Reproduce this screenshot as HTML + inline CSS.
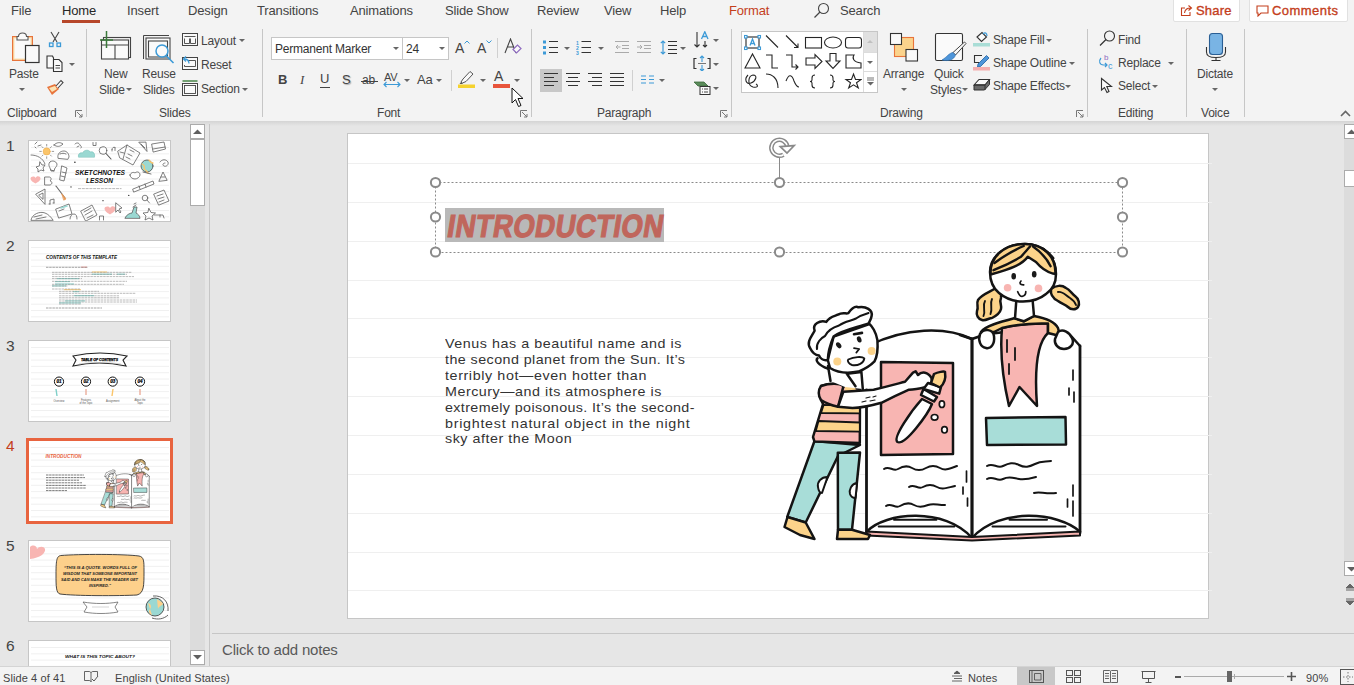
<!DOCTYPE html>
<html><head><meta charset="utf-8">
<style>
*{margin:0;padding:0;box-sizing:border-box}
html,body{width:1354px;height:685px;overflow:hidden;background:#e6e6e6;font-family:"Liberation Sans",sans-serif;color:#444}
.a{position:absolute}
.t{position:absolute;white-space:nowrap;font-size:12px;line-height:14px;color:#444;letter-spacing:-0.2px}
#tabs{left:0;top:0;width:1354px;height:25px;background:#f3f3f3}
#ribbon{left:0;top:25px;width:1354px;height:96px;background:#f3f3f3}
#shadow{left:0;top:121px;width:1354px;height:5px;background:linear-gradient(#d4d4d4,#e6e6e6)}
.tab{position:absolute;top:3px;font-size:13px;line-height:15px;color:#444;white-space:nowrap;letter-spacing:-0.15px}
.sep{position:absolute;width:1px;background:#c6c6c6}
.lbl{position:absolute;top:106px;font-size:12px;line-height:14px;color:#444;white-space:nowrap;letter-spacing:-0.2px}
.dd{position:absolute;width:0;height:0;border-left:3px solid transparent;border-right:3px solid transparent;border-top:3px solid #666}
#status{left:0;top:666px;width:1354px;height:19px;background:#f3f3f3;border-top:1px solid #d4d4d4}
#status .t{font-size:11px;letter-spacing:0.1px;top:4px !important}
.thumb{position:absolute;left:28px;width:143px;height:82px;background:#fff;border:1px solid #c6c6c6;overflow:hidden}
.num{position:absolute;left:6px;font-size:15.5px;line-height:16px;color:#444;margin-top:-1.5px}
</style></head><body>
<div id="tabs" class="a">
  <div class="tab" style="left:11px">File</div>
  <div class="tab" style="left:62px;color:#262626">Home</div>
  <div class="a" style="left:62px;top:20px;width:38px;height:3px;background:#b7472a"></div>
  <div class="tab" style="left:127px">Insert</div>
  <div class="tab" style="left:188px">Design</div>
  <div class="tab" style="left:257px">Transitions</div>
  <div class="tab" style="left:350px">Animations</div>
  <div class="tab" style="left:445px">Slide Show</div>
  <div class="tab" style="left:537px">Review</div>
  <div class="tab" style="left:604px">View</div>
  <div class="tab" style="left:660px">Help</div>
  <div class="tab" style="left:729px;color:#c43e1c">Format</div>
  <div class="tab" style="left:840px">Search</div>
</div>

<div id="ribbon" class="a">
</div>
<!-- ribbon contents (absolute page coords) -->
<div class="a" style="left:0;top:0;width:1354px;height:125px">
  <!-- separators -->
  <div class="sep" style="left:86px;top:29px;height:88px"></div>
  <div class="sep" style="left:262px;top:29px;height:88px"></div>
  <div class="sep" style="left:531px;top:29px;height:88px"></div>
  <div class="sep" style="left:731px;top:29px;height:88px"></div>
  <div class="sep" style="left:1087px;top:29px;height:88px"></div>
  <div class="sep" style="left:1186px;top:29px;height:88px"></div>
  <div class="sep" style="left:1244px;top:29px;height:88px"></div>
  <!-- group labels -->
  <div class="lbl" style="left:7px">Clipboard</div>
  <div class="lbl" style="left:159px">Slides</div>
  <div class="lbl" style="left:377px">Font</div>
  <div class="lbl" style="left:597px">Paragraph</div>
  <div class="lbl" style="left:880px">Drawing</div>
  <div class="lbl" style="left:1118px">Editing</div>
  <div class="lbl" style="left:1201px">Voice</div>
  <!-- launchers -->
  <svg class="a" style="left:75px;top:110px" width="8" height="8"><path d="M0.5 7V0.5H7" fill="none" stroke="#777"/><path d="M2 2L7 7M4 7H7V4" fill="none" stroke="#777"/></svg>
  <svg class="a" style="left:520px;top:110px" width="8" height="8"><path d="M0.5 7V0.5H7" fill="none" stroke="#777"/><path d="M2 2L7 7M4 7H7V4" fill="none" stroke="#777"/></svg>
  <svg class="a" style="left:720px;top:110px" width="8" height="8"><path d="M0.5 7V0.5H7" fill="none" stroke="#777"/><path d="M2 2L7 7M4 7H7V4" fill="none" stroke="#777"/></svg>
  <svg class="a" style="left:1076px;top:110px" width="8" height="8"><path d="M0.5 7V0.5H7" fill="none" stroke="#777"/><path d="M2 2L7 7M4 7H7V4" fill="none" stroke="#777"/></svg>
  <!-- collapse chevron -->
  <svg class="a" style="left:1340px;top:109px" width="11" height="8"><path d="M1 7L5.5 2.5L10 7" fill="none" stroke="#666" stroke-width="1.6"/></svg>

  <!-- CLIPBOARD -->
  <svg class="a" style="left:11px;top:31px" width="30" height="33">
    <rect x="1.6" y="5.6" width="19.8" height="23.8" fill="#fbe3b3" stroke="#e8743b" stroke-width="1.2"/>
    <rect x="3.5" y="7.5" width="16" height="20" fill="#fafafa"/>
    <path d="M7.5 5.5C7.5 3 9 2 11.5 2S15.5 3 15.5 5.5H17V9H6V5.5Z" fill="#fafafa" stroke="#555" stroke-width="1.1"/>
    <rect x="14.5" y="14.5" width="13.5" height="17" fill="#fafafa" stroke="#333" stroke-width="1.2"/>
  </svg>
  <div class="t" style="left:9px;top:67px">Paste</div>
  <div class="dd" style="left:19px;top:88px"></div>
  <svg class="a" style="left:48px;top:31px" width="14" height="18">
    <path d="M3 1L9 11M11 1L5 11" stroke="#444" stroke-width="1.1" fill="none"/>
    <rect x="1.5" y="12" width="3.5" height="3.5" fill="none" stroke="#3c9ad7" stroke-width="1.3"/>
    <rect x="9" y="12" width="3.5" height="3.5" fill="none" stroke="#3c9ad7" stroke-width="1.3"/>
  </svg>
  <svg class="a" style="left:46px;top:55px" width="18" height="18">
    <path d="M1 1H6.5L7.5 3V13H1Z" fill="#fafafa" stroke="#333" stroke-width="1.1"/>
    <path d="M7.5 4.5H13L16 7.5V16.5H7.5Z" fill="#fafafa" stroke="#333" stroke-width="1.1"/>
    <path d="M9.5 10.5H14M9.5 13H14" stroke="#333" stroke-width="0.9"/>
  </svg>
  <div class="dd" style="left:69px;top:63px"></div>
  <svg class="a" style="left:46px;top:79px" width="18" height="17">
    <path d="M1 8L9 5L13 10L6 16Z" fill="#e8743b"/>
    <path d="M3 9L9 7L11 10L6 13Z" fill="#fbe3b3"/>
    <path d="M10 7L15 1.5L17 3.5L12 9" fill="#fafafa" stroke="#444" stroke-width="1.1"/>
  </svg>


  <!-- FONT -->
  <div class="a" style="left:271px;top:37px;width:132px;height:23px;background:#fff;border:1px solid #c6c6c6"></div>
  <div class="a" style="left:402px;top:37px;width:47px;height:23px;background:#fff;border:1px solid #c6c6c6"></div>
  <div class="t" style="left:275px;top:42px;color:#333">Permanent Marker</div>
  <div class="t" style="left:406px;top:42px;color:#333">24</div>
  <div class="dd" style="left:393px;top:47px"></div>
  <div class="dd" style="left:439px;top:47px"></div>
  <div class="t" style="left:455px;top:41px;font-size:14px;color:#444">A</div>
  <svg class="a" style="left:464px;top:40px" width="6" height="4"><path d="M0.5 3.5L3 1L5.5 3.5" fill="none" stroke="#3c9ad7" stroke-width="1"/></svg>
  <div class="t" style="left:477px;top:41px;font-size:14px;color:#444">A</div>
  <svg class="a" style="left:486px;top:40px" width="6" height="4"><path d="M0.5 0.5L3 3L5.5 0.5" fill="none" stroke="#3c9ad7" stroke-width="1"/></svg>
  <div class="sep" style="left:497px;top:38px;height:20px;background:#d0d0d0"></div>
  <svg class="a" style="left:504px;top:38px" width="18" height="18">
    <path d="M1 15L6.5 1L12 15M3.5 9H9.5" fill="none" stroke="#444" stroke-width="1.1"/>
    <path d="M9 11.5L13.5 7L17 10.5L12.5 15Z" fill="#fafafa" stroke="#8e6bbf" stroke-width="1.2"/>
  </svg>
  <div class="t" style="left:278px;top:73px;font-size:13px;font-weight:bold;color:#444">B</div>
  <div class="t" style="left:300px;top:73px;font-size:13px;font-style:italic;color:#444;font-family:'Liberation Serif',serif">I</div>
  <div class="t" style="left:320px;top:72px;font-size:13px;color:#444">U</div>
  <div class="a" style="left:320px;top:87px;width:10px;height:1px;background:#444"></div>
  <div class="t" style="left:342px;top:73px;font-size:13px;color:#444;text-shadow:1px 1px 1px #aaa">S</div>
  <div class="t" style="left:362px;top:73px;font-size:12px;color:#444">ab</div>
  <div class="a" style="left:361px;top:81px;width:17px;height:1px;background:#444"></div>
  <div class="t" style="left:384px;top:70px;font-size:11px;color:#444">AV</div>
  <svg class="a" style="left:383px;top:81px" width="18" height="7"><path d="M1 3.5H17M3.5 1L1 3.5L3.5 6M14.5 1L17 3.5L14.5 6" fill="none" stroke="#3c9ad7" stroke-width="1.1"/></svg>
  <div class="dd" style="left:404px;top:79px"></div>
  <div class="t" style="left:417px;top:73px;font-size:13px;color:#444">Aa</div>
  <div class="dd" style="left:436px;top:79px"></div>
  <div class="sep" style="left:451px;top:70px;height:21px;background:#d0d0d0"></div>
  <svg class="a" style="left:458px;top:70px" width="18" height="18">
    <path d="M3 12L5 9L12 1.5L15 4L8 11.5L4.5 13Z" fill="#fafafa" stroke="#555" stroke-width="1"/>
    <path d="M3 12L1.5 14H5Z" fill="#555"/>
    <rect x="0" y="14.5" width="17" height="3.5" fill="#f5d22e"/>
  </svg>
  <div class="dd" style="left:480px;top:79px"></div>
  <div class="t" style="left:494px;top:69px;font-size:14px;color:#444">A</div>
  <div class="a" style="left:493px;top:84px;width:17px;height:4px;background:#e8543b"></div>
  <div class="dd" style="left:514px;top:79px"></div>
  <!-- cursor -->
  <svg class="a" style="left:511px;top:87px" width="14" height="21">
    <path d="M1 1V16L4.5 12.5L7.5 19.5L10 18.5L7 11.5H12Z" fill="#fff" stroke="#111" stroke-width="1"/>
  </svg>

  <!-- PARAGRAPH -->
  <svg class="a" style="left:543px;top:40px" width="16" height="15">
    <rect x="0" y="0.5" width="3" height="3" fill="#3c9ad7"/><rect x="0" y="6" width="3" height="3" fill="#3c9ad7"/><rect x="0" y="11.5" width="3" height="3" fill="#3c9ad7"/>
    <path d="M6 1.5H15M6 7.5H15M6 12.5H15" stroke="#333" stroke-width="1"/>
  </svg>
  <div class="dd" style="left:564px;top:47px"></div>
  <svg class="a" style="left:576px;top:40px" width="16" height="15">
    <text x="0" y="4.5" font-size="5" fill="#3c9ad7" font-family="Liberation Sans" font-weight="bold">1</text>
    <text x="0" y="10" font-size="5" fill="#3c9ad7" font-family="Liberation Sans" font-weight="bold">2</text>
    <text x="0" y="15" font-size="5" fill="#3c9ad7" font-family="Liberation Sans" font-weight="bold">3</text>
    <path d="M5.5 1.5H15M5.5 7.5H15M5.5 12.5H15" stroke="#333" stroke-width="1"/>
  </svg>
  <div class="dd" style="left:598px;top:47px"></div>
  <svg class="a" style="left:615px;top:40px" width="15" height="14">
    <path d="M0 1.5H14M7 5.5H14M7 8.5H14M0 12.5H14" stroke="#aaa" stroke-width="1"/>
    <path d="M5.5 7H1M3 5L1 7L3 9" fill="none" stroke="#aaa" stroke-width="1"/>
  </svg>
  <svg class="a" style="left:637px;top:40px" width="15" height="14">
    <path d="M0 1.5H14M7 5.5H14M7 8.5H14M0 12.5H14" stroke="#aaa" stroke-width="1"/>
    <path d="M0 7H5M3 5L5 7L3 9" fill="none" stroke="#aaa" stroke-width="1"/>
  </svg>
  <svg class="a" style="left:660px;top:40px" width="18" height="15">
    <path d="M3 1V14M0.8 3.2L3 1L5.2 3.2M0.8 11.8L3 14L5.2 11.8" fill="none" stroke="#3c9ad7" stroke-width="1.2"/>
    <path d="M8 1.5H17M8 5.5H17M8 9.5H17M8 13.5H17" stroke="#333" stroke-width="1"/>
  </svg>
  <div class="dd" style="left:680px;top:47px"></div>
  <svg class="a" style="left:694px;top:31px" width="17" height="18">
    <path d="M3 1V16M0.5 13.5L3 16L5.5 13.5" fill="none" stroke="#333" stroke-width="1.1"/>
    <path d="M11 10V16M9 14L11 16L13 14" fill="none" stroke="#333" stroke-width="1.1"/>
    <path d="M7.5 8L10.8 0.8L14 8M8.7 5.5H12.8" fill="none" stroke="#3c9ad7" stroke-width="1.3"/>
  </svg>
  <div class="dd" style="left:713px;top:39px"></div>
  <svg class="a" style="left:693px;top:55px" width="18" height="16">
    <path d="M3.5 3.5H1V13.5H3.5M14.5 3.5H17V13.5H14.5" fill="none" stroke="#333" stroke-width="1.2"/>
    <path d="M5 8.5H13" stroke="#777" stroke-width="1"/>
    <path d="M9 1V7M7 3L9 1L11 3M9 10V16M7 14L9 16L11 14" fill="none" stroke="#3c9ad7" stroke-width="1.1"/>
  </svg>
  <div class="dd" style="left:713px;top:63px"></div>
  <svg class="a" style="left:694px;top:81px" width="17" height="14">
    <path d="M0 1H10L14 5H4Z" fill="#5a8a5a" stroke="#3a6a3a" stroke-width="0.8"/>
    <rect x="6" y="5.5" width="10" height="8" fill="#fafafa" stroke="#333" stroke-width="1"/>
    <path d="M8 8H9M10 8H14M8 11H9M10 11H14" stroke="#333" stroke-width="0.9"/>
  </svg>
  <div class="dd" style="left:713px;top:87px"></div>
  <div class="a" style="left:540px;top:69px;width:22px;height:23px;background:#c8c8c8"></div>
  <svg class="a" style="left:543px;top:72px" width="84" height="15">
    <path d="M1 1.5H15M1 5.5H11M1 9.5H15M1 13.5H11" stroke="#333" stroke-width="1.1"/>
    <path d="M23 1.5H37M25 5.5H35M23 9.5H37M25 13.5H35" stroke="#333" stroke-width="1.1"/>
    <path d="M45 1.5H59M49 5.5H59M45 9.5H59M49 13.5H59" stroke="#333" stroke-width="1.1"/>
    <path d="M67 1.5H81M67 5.5H81M67 9.5H81M67 13.5H81" stroke="#333" stroke-width="1.1"/>
  </svg>
  <div class="sep" style="left:632px;top:70px;height:21px;background:#d0d0d0"></div>
  <svg class="a" style="left:641px;top:75px" width="14" height="10">
    <path d="M0 1H5M8 1H13M0 4.5H5M8 4.5H13M0 8H5M8 8H13" stroke="#3c9ad7" stroke-width="1.2"/>
  </svg>
  <div class="dd" style="left:659px;top:79px"></div>


  <!-- DRAWING -->
  <div class="a" style="left:741px;top:31px;width:137px;height:62px;background:#fff;border:1px solid #c6c6c6"></div>
  <div class="a" style="left:863px;top:32px;width:14px;height:60px;border-left:1px solid #dcdcdc"></div>
  <div class="a" style="left:864px;top:32px;width:13px;height:20px;background:#e0e0e0"></div>
  <div class="a" style="left:864px;top:52px;width:13px;height:1px;background:#dcdcdc"></div>
  <div class="a" style="left:864px;top:71px;width:13px;height:1px;background:#dcdcdc"></div>
  <svg class="a" style="left:866px;top:39px" width="8" height="5"><path d="M1 4L4 1L7 4Z" fill="#c0c0c0"/></svg>
  <div class="dd" style="left:867px;top:61px"></div>
  <svg class="a" style="left:866px;top:77px" width="9" height="9"><path d="M1 1H8M1 3H8" stroke="#666" stroke-width="0.9"/><path d="M1 5L4.5 8.5L8 5Z" fill="#666"/></svg>
  <svg class="a" style="left:744px;top:33px" width="118" height="58" fill="none" stroke="#262626" stroke-width="1.1">
    <!-- row1 -->
    <rect x="2" y="4" width="13" height="11"/>
    <rect x="0.5" y="2.5" width="2.5" height="2.5" fill="#fff" stroke="#3c9ad7"/><rect x="14" y="2.5" width="2.5" height="2.5" fill="#fff" stroke="#3c9ad7"/>
    <rect x="0.5" y="14" width="2.5" height="2.5" fill="#fff" stroke="#3c9ad7"/><rect x="14" y="14" width="2.5" height="2.5" fill="#fff" stroke="#3c9ad7"/>
    <path d="M6 12.5L8.5 6L11 12.5M7 10.5H10" stroke="#3c9ad7" stroke-width="1.3"/>
    <path d="M22 2.5L34 14.5"/>
    <path d="M42 2.5L54 14.5M50 14.5H54V10.5"/>
    <rect x="61.5" y="4.5" width="16" height="10.5"/>
    <ellipse cx="89" cy="9.5" rx="8.5" ry="5.5"/>
    <rect x="101.5" y="4.5" width="16" height="10.5" rx="2.5"/>
    <!-- row2 -->
    <path d="M1 35L8.5 21L16 35Z"/>
    <path d="M22 22H28V35H34"/>
    <path d="M42 22H48V34H54M51.5 31.5L54 34L51.5 36.5"/>
    <path d="M62 25H71V21.5L78 28.5L71 35.5V32H62Z"/>
    <path d="M86 20.5H92V28H96L89 35.5L82 28H86Z"/>
    <path d="M102 22H110C108 25 109 29 117 30V35H102Z"/>
    <!-- row3 -->
    <path d="M4 42C0 46 2 52 7 50C12 48 14 42 9 42C4 43 3 52 9 54C13 55 15 53 12 51"/>
    <path d="M22 41C28 41 34 45 34 55"/>
    <path d="M42 48C45 40 48 42 50 48C52 53 53 54 55 54"/>
    <path d="M71 42C69 42 68 43 68 45V47C68 48 67 48.5 66 48.5C67 48.5 68 49 68 50V52C68 54 69 55 71 55"/>
    <path d="M86 42C88 42 89 43 89 45V47C89 48 90 48.5 91 48.5C90 48.5 89 49 89 50V52C89 54 88 55 86 55"/>
    <path d="M109.5 41L111.5 46.5H117L112.5 49.8L114.3 55L109.5 51.8L104.7 55L106.5 49.8L102 46.5H107.5Z"/>
  </svg>
  <svg class="a" style="left:889px;top:32px" width="30" height="30">
    <rect x="5.5" y="5.5" width="19" height="19" fill="#fbd38c" stroke="#e8743b" stroke-width="1.1"/>
    <rect x="1.5" y="1.5" width="11" height="11" fill="#fafafa" stroke="#333" stroke-width="1.1"/>
    <rect x="17" y="17.5" width="11.5" height="11.5" fill="#fafafa" stroke="#333" stroke-width="1.1"/>
  </svg>
  <div class="t" style="left:883px;top:67px">Arrange</div>
  <div class="dd" style="left:901px;top:88px"></div>
  <svg class="a" style="left:934px;top:32px" width="33" height="30">
    <rect x="1.5" y="1.5" width="27" height="27" rx="1.5" fill="#fafafa" stroke="#333" stroke-width="1.1"/>
    <path d="M30.5 10L32 11.5L21.5 23L19 20.5Z" fill="#fafafa" stroke="#444" stroke-width="1"/>
    <path d="M19 20.5C15 21 13 25 8 28C14 29.5 20 28 21.5 23Z" fill="#4e95d9" stroke="#2a6aa8" stroke-width="0.6"/>
  </svg>
  <div class="t" style="left:934px;top:67px">Quick</div>
  <div class="t" style="left:930px;top:83px">Styles</div>
  <div class="dd" style="left:962px;top:88px"></div>
  <svg class="a" style="left:973px;top:31px" width="18" height="17">
    <path d="M4 6L9 1.5L13.5 6L8.5 10.5Z" fill="#fafafa" stroke="#333" stroke-width="1.1"/>
    <path d="M10 3C12 1 14 2 14 5" fill="none" stroke="#3c9ad7" stroke-width="1.2"/>
    <rect x="0" y="12" width="17" height="3.5" fill="#a9ddd6"/>
  </svg>
  <div class="t" style="left:993px;top:33px">Shape Fill</div>
  <div class="dd" style="left:1046px;top:39px"></div>
  <svg class="a" style="left:973px;top:53px" width="18" height="18">
    <path d="M6 9.5H1.5V2.5H9" fill="none" stroke="#333" stroke-width="1.1"/>
    <path d="M5 11L13.5 2.5L16 5L7.5 13.5L4.5 14Z" fill="#4e95d9" stroke="#2a6aa8" stroke-width="0.9"/>
    <rect x="0" y="14" width="17" height="3.5" fill="#f5aeae"/>
  </svg>
  <div class="t" style="left:993px;top:56px">Shape Outline</div>
  <div class="dd" style="left:1069px;top:62px"></div>
  <svg class="a" style="left:973px;top:78px" width="18" height="14">
    <path d="M1 7L6 1.5H16.5L12 7Z" fill="#fafafa" stroke="#333" stroke-width="1.1"/>
    <path d="M1 7V12H11.5L16.5 6.5V1.5L12 7Z" fill="#6a6a6a" stroke="#333" stroke-width="1"/>
    <path d="M1 7H12V12" fill="none" stroke="#333" stroke-width="1"/>
  </svg>
  <div class="t" style="left:993px;top:79px">Shape Effects</div>
  <div class="dd" style="left:1065px;top:85px"></div>

  <!-- EDITING -->
  <svg class="a" style="left:1099px;top:30px" width="17" height="17">
    <circle cx="10.5" cy="6" r="5" fill="none" stroke="#333" stroke-width="1.1"/>
    <path d="M7 9.5L1 15.5" stroke="#333" stroke-width="1.3"/>
  </svg>
  <div class="t" style="left:1118px;top:33px">Find</div>
  <svg class="a" style="left:1098px;top:53px" width="17" height="17">
    <path d="M3 5C0.5 8 1.5 12 5.5 12H9M7 10L9 12L7 14" fill="none" stroke="#3c9ad7" stroke-width="1.2"/>
    <text x="6" y="7" font-size="8" fill="#8e6bbf" font-family="Liberation Sans">b</text>
    <text x="10" y="16" font-size="9" fill="#3c9ad7" font-family="Liberation Sans">c</text>
  </svg>
  <div class="t" style="left:1118px;top:56px">Replace</div>
  <div class="dd" style="left:1168px;top:62px"></div>
  <svg class="a" style="left:1100px;top:77px" width="13" height="17">
    <path d="M1.5 1.5V13L4.5 10.5L7 15.5L9 14.5L6.8 9.5H11.5Z" fill="#fafafa" stroke="#333" stroke-width="1.1"/>
  </svg>
  <div class="t" style="left:1118px;top:79px">Select</div>
  <div class="dd" style="left:1152px;top:85px"></div>

  <!-- VOICE -->
  <svg class="a" style="left:1205px;top:32px" width="22" height="30">
    <rect x="4.5" y="1.5" width="13" height="21" rx="3" fill="#79b4e4" stroke="#2a5f95" stroke-width="1.1"/>
    <path d="M1.5 15V20C1.5 24 4 25.5 11 25.5C18 25.5 20.5 24 20.5 20V15M11 25.5V28.5M6.5 28.5H15.5" fill="none" stroke="#333" stroke-width="1.1"/>
  </svg>
  <div class="t" style="left:1197px;top:67px">Dictate</div>
  <div class="dd" style="left:1212px;top:88px"></div>

  <!-- Share / Comments -->
  <div class="a" style="left:1173px;top:-2px;width:67px;height:24px;background:#fff;border:1px solid #e1e1e1;border-radius:2px"></div>
  <svg class="a" style="left:1180px;top:4px" width="13" height="13">
    <path d="M5 4H1.5V11.5H10V8" fill="none" stroke="#c43e1c" stroke-width="1.1"/>
    <path d="M4.5 9C5 5.5 7 4 10.5 4M8.5 1.5L11.5 4L8.5 6.5" fill="none" stroke="#c43e1c" stroke-width="1.1"/>
  </svg>
  <div class="t" style="left:1196px;top:4px;font-size:13px;color:#c43e1c;letter-spacing:0.2px;-webkit-text-stroke:0.35px #c43e1c">Share</div>
  <div class="a" style="left:1249px;top:-2px;width:99px;height:24px;background:#fff;border:1px solid #e1e1e1;border-radius:2px"></div>
  <svg class="a" style="left:1256px;top:5px" width="13" height="12">
    <path d="M1 1H12V8H5L2 11V8H1Z" fill="none" stroke="#c43e1c" stroke-width="1.1"/>
  </svg>
  <div class="t" style="left:1272px;top:4px;font-size:13px;color:#c43e1c;letter-spacing:0.45px;-webkit-text-stroke:0.35px #c43e1c">Comments</div>
  <!-- search icon -->
  <svg class="a" style="left:813px;top:2px" width="17" height="17">
    <circle cx="10.5" cy="6.5" r="5" fill="none" stroke="#444" stroke-width="1.1"/>
    <path d="M7 10L1.5 15.5" stroke="#444" stroke-width="1.2"/>
  </svg>

  <!-- SLIDES -->
  <svg class="a" style="left:99px;top:30px" width="34" height="30">
    <rect x="4.5" y="7.5" width="27" height="20" fill="none" stroke="#444" stroke-width="1.1"/>
    <rect x="2.5" y="10" width="27" height="19" fill="#fafafa" stroke="#444" stroke-width="1.1"/>
    <path d="M3 15H29M16 15V29" stroke="#444" stroke-width="1.1"/>
    <path d="M1 10H14M7.5 1V18" stroke="#3a7a3a" stroke-width="1.5"/>
  </svg>
  <div class="t" style="left:104px;top:67px">New</div>
  <div class="t" style="left:99px;top:83px">Slide</div>
  <div class="dd" style="left:126px;top:88px"></div>
  <svg class="a" style="left:143px;top:35px" width="32" height="30">
    <path d="M0.5 0.5H26M0.5 0.5V24" fill="none" stroke="#444" stroke-width="1.1"/>
    <rect x="3" y="3" width="24" height="21" fill="#fafafa" stroke="#444" stroke-width="1.1"/>
    <rect x="5.5" y="6" width="19" height="16" fill="#fafafa" stroke="#444" stroke-width="1.1"/>
    <circle cx="19" cy="16" r="6" fill="#fafafa" stroke="#3c9ad7" stroke-width="1.5"/>
    <path d="M23 20.5L30.5 28" stroke="#3c9ad7" stroke-width="1.6"/>
  </svg>
  <div class="t" style="left:142px;top:67px">Reuse</div>
  <div class="t" style="left:143px;top:83px">Slides</div>
  <svg class="a" style="left:182px;top:33px" width="16" height="13">
    <rect x="0.5" y="0.5" width="15" height="12" fill="#fafafa" stroke="#444"/>
    <path d="M2.5 3.5H13.5M2.5 5.5V10.5H7.5V5.5M8.5 5.5V10.5H13.5V5.5" fill="none" stroke="#444" stroke-width="0.9"/>
  </svg>
  <div class="t" style="left:201px;top:34px">Layout</div>
  <div class="dd" style="left:239px;top:39px"></div>
  <svg class="a" style="left:182px;top:56px" width="16" height="14">
    <rect x="0.5" y="1.5" width="15" height="12" fill="#fafafa" stroke="#444"/>
    <path d="M6 4.5H13.5V10.5H2.5V9" fill="none" stroke="#444" stroke-width="0.9"/>
    <path d="M7 7.5C7 4 5 3 2 3M4 0.5L1.5 3L4 5.5" fill="none" stroke="#3c9ad7" stroke-width="1.3"/>
  </svg>
  <div class="t" style="left:201px;top:58px">Reset</div>
  <svg class="a" style="left:182px;top:80px" width="16" height="16">
    <path d="M0.5 1H15.5" stroke="#3a7a3a" stroke-width="1.4"/>
    <rect x="0.5" y="3.5" width="15" height="12" fill="#fafafa" stroke="#444"/>
    <rect x="2.5" y="5.5" width="11" height="8" fill="none" stroke="#444" stroke-width="0.9"/>
  </svg>
  <div class="t" style="left:201px;top:82px">Section</div>
  <div class="dd" style="left:242px;top:88px"></div>
</div>

<div id="shadow" class="a"></div>


<!-- THUMBNAIL PANE -->
<div class="a" style="left:190px;top:124px;width:15px;height:542px;background:#dcdcdc"></div>
<div class="a" style="left:190px;top:124px;width:15px;height:15px;background:#fff;border:1px solid #ababab"></div>
<svg class="a" style="left:193px;top:129px" width="9" height="5"><path d="M0 5L4.5 0.5L9 5Z" fill="#606060"/></svg>
<div class="a" style="left:190px;top:139px;width:15px;height:67px;background:#fff;border:1px solid #ababab"></div>
<div class="a" style="left:190px;top:650px;width:15px;height:15px;background:#fff;border:1px solid #ababab"></div>
<svg class="a" style="left:193px;top:655px" width="9" height="5"><path d="M0 0L4.5 4.5L9 0Z" fill="#606060"/></svg>
<div class="a" style="left:209px;top:124px;width:1px;height:542px;background:#c6c6c6"></div>

<div class="num" style="top:139px">1</div>
<div class="thumb" style="top:140px" id="th1"><svg width="141" height="80" viewBox="0 0 141 80"><g stroke="#ececec" stroke-width="0.8"><path d="M2 6.5H140" /><path d="M2 12.8H140" /><path d="M2 19.1H140" /><path d="M2 25.4H140" /><path d="M2 31.7H140" /><path d="M2 38.0H140" /><path d="M2 44.3H140" /><path d="M2 50.6H140" /><path d="M2 56.9H140" /><path d="M2 63.2H140" /><path d="M2 69.5H140" /><path d="M2 75.8H140" /></g>
<g fill="none" stroke="#555" stroke-width="0.75" stroke-linejoin="round" stroke-linecap="round">
<path d="M6 3l2-2M9 5l3-1M6 6l1 1"/>
<path d="M25 4c3-3 6-3 9-1c-3 3-6 3-9 1z"/>
<path d="M46 3c2-2 4-1 5 1c1 1 2 2 1 3M48 6l2-1"/>
<path d="M64 1.5v3h3v-3"/>
<circle cx="17.7" cy="10.4" r="3.6" fill="#fbc56a" stroke="#e9a94a" stroke-width="0.5"/>
<path d="M12.3 10.4h-1.6M23.1 10.4h1.6M17.7 5v-1.6M17.7 15.8v1.6M14 6.7l-1-1M21.4 14.1l1 1M21.4 6.7l1-1M14 14.1l-1 1" stroke-width="0.6"/>
<path d="M29 17c-1-4 2-7 6-7c3 0 5 3 5 6l-1 2z M31 13c2-1 4-1 6 0"/>
<path d="M49.5 16c-1-3 2-5 4-4c1-3 6-4 8-1c2-1 5 1 4 5z" fill="#9ad8d2" stroke="#6bb8b0" stroke-width="0.5"/>
<circle cx="74" cy="9.5" r="3.8"/><path d="M77 12.5l5 5.5" stroke-width="1.1"/>
<path d="M83 8.5c0-2 2-3 3-2M86 6.5v3M83 8.5v1.5"/>
<path d="M89 10l9-6l13 8l-7 12l-13-7z M98 4l-4 14M91 11l4 1M101 9l4 2M99 13l4 2M97 16l4 2" />
<path d="M110 1.5l8 9l-1-9z M112 3l4 4"/>
<path d="M123 3l12-2l1.5 7l-12 3z M124 8l12-2"/>
<path d="M2 14c6 0 12 3 14 9"/><path d="M11 21l2 3l3 0l-2 3l1 3l-3-1l-3 2l0-3l-2-2l3-1z"/>
<path d="M21 21c2-2 6-1 7 2c0 2-1 3-2 4l-1 3h-3l-1-3c-1-2-2-4 0-6z M22 29l3 1"/>
<path d="M33 25l5 2l-3 13l-4-1z M33 31l4 1M32 35l4 1"/>
<circle cx="118" cy="25" r="6" fill="#9ad8d2" stroke="#444"/><path d="M113 23c2 1 3 3 2 5c2 1 3 2 4 4M120 19c1 2 3 3 4 3" stroke="#fbc56a" stroke-width="1.3"/><path d="M114 31l8 2" stroke="#444"/>
<path d="M131 21c2-3 6-3 8 0c1 3-2 5-4 4c-2-1-1-3 1-3"/>
<path d="M1.5 37.5c0-2 4-3 5-0.5c1-2.5 5-2 5 0.5c0 2-3 4-5 5c-2-1-5-3-5-5z" fill="#f8b5b2" stroke="none"/>
<path d="M16 36h4c2 0 3 2 1 4c2 0 3 3 0 4h-5z"/>
<path d="M101 34c1-3 4-3 5-2c2-2 5-1 5 2c0 2-3 4-5 4c-3 0-5-2-5-4z"/>
<path d="M130 40l4-9l4 8z M132 36h4"/>
<path d="M27 45l9 12" stroke="#666" stroke-width="1.1"/><path d="M33 53l4 5l-2 1z" fill="#e99a55" stroke="#e99a55"/>
<path d="M104 48l20-8l1 3l-20 8z M110 45l1 3M116 43l1 3"/>
<path d="M7 53l9-5l0 15z M10 54l4-2v6z"/>
<path d="M21 63v-4l4-1v4M21 63l-1 0M25 62l-1 0"/>
<path d="M125 53l10-4l5 11l-10 4z M128 55l6-2M129 58l6-2M130 61l5-2"/>
<circle cx="116" cy="57" r="2.8"/><path d="M118 59l2.5 3"/>
<path d="M2 79c1-6 9-9 14-7c3 1 6 4 8 7z M5 76l8-2M7 78l10-2"/>
<path d="M27 68l13-5l3 10l-13 4z M30 70l5-2" /><path d="M32 67l6-2" stroke="#9ad8d2" stroke-width="1.6"/>
<path d="M41 78c0-3 2-5 4-5c2 0 3 2 3 5"/>
<path d="M52 70l11-6l5 10l-11 6z M55 71l7-4M56 74l7-4M58 77l6-3"/>
<path d="M70.5 79v-4h4v4"/>
<path d="M75.5 67.5c0-2 4-3 5.5-0.5c1.5-2.5 5.5-2 5.5 0.5c0 3-4 5-5.5 6c-1.5-1-5.5-3-5.5-6z" fill="#f8b5b2" stroke="none"/>
<path d="M87 62l6 5l-3 1l2 3l-1 1l-2-3l-2 2z"/>
<path d="M96 77c1-3 5-5 7-5l2-6h3l-1 6c2 1 4 3 4 5z" fill="#9ad8d2" stroke="#555"/><path d="M104 66l3-2M105 63l2-1"/>
<path d="M120 67.5l2 4l4.5 0.5l-3.5 3l1 4l-4-2l-4 2l1-4l-3-3l4.5-0.5z"/>
<path d="M125 74h9l1 3M131 74v2"/>
</g>
<g fill="#111"><circle cx="45.9" cy="21.3" r="0.7"/><circle cx="99.8" cy="54.4" r="0.6"/><circle cx="74" cy="59.7" r="0.6"/><circle cx="42" cy="45.9" r="0.6"/></g>
<g fill="#111" font-family="Liberation Sans" font-weight="bold" font-style="italic" text-anchor="middle">
<text x="71" y="34.2" font-size="6.8" textLength="50" lengthAdjust="spacingAndGlyphs">SKETCHNOTES</text>
<text x="70.5" y="42" font-size="6.8" textLength="27" lengthAdjust="spacingAndGlyphs">LESSON</text>
</g>
<path d="M49 47.6H92.5" stroke="#888" stroke-width="0.6" stroke-dasharray="3 0.8"/>
</svg></div>
<div class="num" style="top:239px">2</div>
<div class="thumb" style="top:240px" id="th2"><svg width="141" height="80" viewBox="0 0 141 80"><g stroke="#ececec" stroke-width="0.8"><path d="M2 6.5H140" /><path d="M2 12.8H140" /><path d="M2 19.1H140" /><path d="M2 25.4H140" /><path d="M2 31.7H140" /><path d="M2 38.0H140" /><path d="M2 44.3H140" /><path d="M2 50.6H140" /><path d="M2 56.9H140" /><path d="M2 63.2H140" /><path d="M2 69.5H140" /><path d="M2 75.8H140" /></g><rect x="52" y="25.5" width="6" height="1.2" fill="#f8b5b2"/><rect x="63" y="30.4" width="15" height="1.2" fill="#fbd38a"/><rect x="63" y="32.6" width="20" height="1.2" fill="#9ad8d2"/><rect x="88" y="32.6" width="8" height="1.2" fill="#9ad8d2"/><rect x="28" y="37" width="22" height="1.2" fill="#9ad8d2"/><rect x="26" y="40" width="15" height="1.2" fill="#9ad8d2"/><rect x="26" y="42.4" width="19" height="1.2" fill="#9ad8d2"/><rect x="23" y="44.3" width="14" height="1.2" fill="#9ad8d2"/><rect x="35" y="48" width="17" height="1.2" fill="#fbd38a"/><rect x="44" y="50" width="6" height="1.2" fill="#9ad8d2"/><rect x="45" y="54" width="20" height="1.2" fill="#9ad8d2"/><rect x="36" y="59.3" width="20" height="1.2" fill="#9ad8d2"/><rect x="30" y="61.3" width="22" height="1.2" fill="#9ad8d2"/><path d="M17 26.3h42" stroke="#666" stroke-width="0.6" stroke-dasharray="2.5 0.7"/><path d="M23 31.3h80" stroke="#808080" stroke-width="0.55" stroke-dasharray="2.5 0.7"/><path d="M23 33.3h75" stroke="#808080" stroke-width="0.55" stroke-dasharray="2.5 0.7"/><path d="M23 35.6h82" stroke="#808080" stroke-width="0.55" stroke-dasharray="2.5 0.7"/><path d="M23 37.6h30" stroke="#808080" stroke-width="0.55" stroke-dasharray="2.5 0.7"/><path d="M23 40.3h75" stroke="#808080" stroke-width="0.55" stroke-dasharray="2.5 0.7"/><path d="M23 43.3h72" stroke="#808080" stroke-width="0.55" stroke-dasharray="2.5 0.7"/><path d="M23 45h16" stroke="#808080" stroke-width="0.55" stroke-dasharray="2.5 0.7"/><path d="M23 48h28" stroke="#808080" stroke-width="0.55" stroke-dasharray="2.5 0.7"/><path d="M30 50.3h40" stroke="#808080" stroke-width="0.55" stroke-dasharray="2.5 0.7"/><path d="M30 52.3h77" stroke="#808080" stroke-width="0.55" stroke-dasharray="2.5 0.7"/><path d="M30 54.8h60" stroke="#808080" stroke-width="0.55" stroke-dasharray="2.5 0.7"/><path d="M30 56.8h60" stroke="#808080" stroke-width="0.55" stroke-dasharray="2.5 0.7"/><path d="M30 59h78" stroke="#808080" stroke-width="0.55" stroke-dasharray="2.5 0.7"/><path d="M30 61h78" stroke="#808080" stroke-width="0.55" stroke-dasharray="2.5 0.7"/><path d="M30 63h22" stroke="#808080" stroke-width="0.55" stroke-dasharray="2.5 0.7"/><path d="M17 67h56" stroke="#666" stroke-width="0.6" stroke-dasharray="2.5 0.7"/>
<text x="17" y="17.5" font-size="4.8" font-family="Liberation Sans" font-weight="bold" font-style="italic" fill="#111" textLength="71" lengthAdjust="spacingAndGlyphs">CONTENTS OF THIS TEMPLATE</text>
</svg></div>
<div class="num" style="top:339px">3</div>
<div class="thumb" style="top:340px" id="th3"><svg width="141" height="80" viewBox="0 0 141 80"><g stroke="#ececec" stroke-width="0.8"><path d="M2 6.5H140" /><path d="M2 12.8H140" /><path d="M2 19.1H140" /><path d="M2 25.4H140" /><path d="M2 31.7H140" /><path d="M2 38.0H140" /><path d="M2 44.3H140" /><path d="M2 50.6H140" /><path d="M2 56.9H140" /><path d="M2 63.2H140" /><path d="M2 69.5H140" /><path d="M2 75.8H140" /></g>
<path d="M44 15c18-4 36-4 54 0l-4 4l3 6c-18-4-36-4-53 0l3-6z" fill="#fff" stroke="#222" stroke-width="1.1"/><path d="M50 23c14-2 28-2 42 0" stroke="#bbb" stroke-width="0.6" fill="none"/>
<text x="70.5" y="20.4" font-size="3.8" font-family="Liberation Sans" font-weight="bold" font-style="italic" fill="#000" text-anchor="middle" textLength="37" lengthAdjust="spacingAndGlyphs" stroke="#000" stroke-width="0.25">TABLE OF CONTENTS</text>
<g fill="#fff" stroke="#111" stroke-width="1"><circle cx="30" cy="40.6" r="4.6"/><circle cx="57" cy="40.6" r="4.6"/><circle cx="83.7" cy="40.6" r="4.6"/><circle cx="111" cy="40.6" r="4.6"/></g>
<g font-size="4.6" font-family="Liberation Sans" font-weight="bold" font-style="italic" fill="#000" stroke="#000" stroke-width="0.2" text-anchor="middle"><text x="30" y="42.3">01</text><text x="57" y="42.2">02</text><text x="83.7" y="42.2">03</text><text x="111" y="42.2">04</text></g>
<path d="M27 48l1 7" stroke="#7fcfc8" stroke-width="1.4"/><path d="M57 48v6" stroke="#e8a08a" stroke-width="1.2"/><path d="M84 48l-1 7" stroke="#fbc56a" stroke-width="1.4"/><path d="M111 48v6" stroke="#e8a08a" stroke-width="1.2"/>
<g font-size="2.6" font-family="Liberation Sans" fill="#555" text-anchor="middle"><text x="30" y="61.3">Overview</text><text x="57" y="60.3">Features</text><text x="57" y="62.8">of the Topic</text><text x="83.7" y="61.3">Assignment</text><text x="111" y="60">About the</text><text x="111" y="62.5">Topic</text></g>
</svg></div>
<div class="num" style="top:439px;color:#c43e1c">4</div>
<div class="a" style="left:26px;top:438px;width:147px;height:86px;border:3px solid #e8643f;background:#fff;overflow:hidden" id="th4"><svg width="141" height="80" viewBox="0 0 141 80"><g stroke="#ececec" stroke-width="0.8"><path d="M2 6.5H140" /><path d="M2 12.8H140" /><path d="M2 19.1H140" /><path d="M2 25.4H140" /><path d="M2 31.7H140" /><path d="M2 38.0H140" /><path d="M2 44.3H140" /><path d="M2 50.6H140" /><path d="M2 56.9H140" /><path d="M2 63.2H140" /><path d="M2 69.5H140" /><path d="M2 75.8H140" /></g>
<text x="16.5" y="17" font-size="4.6" font-family="Liberation Sans" font-weight="bold" font-style="italic" fill="#e8643f" textLength="36" lengthAdjust="spacingAndGlyphs">INTRODUCTION</text>
<g stroke="#444" stroke-width="0.7" stroke-dasharray="2.5 0.6"><path d="M17 34h38M17 36.6h39M17 39.2h33M17 41.8h36M17 44.4h40M17 47h40M17 49.6h21"/></g>
<g transform="translate(0.5 0.6) scale(0.1636) translate(-348 -134)"><use href="#ill"/></g>
</svg></div>
<div class="num" style="top:539px">5</div>
<div class="thumb" style="top:540px" id="th5"><svg width="141" height="80" viewBox="0 0 141 80"><g stroke="#ececec" stroke-width="0.8"><path d="M2 6.5H140" /><path d="M2 12.8H140" /><path d="M2 19.1H140" /><path d="M2 25.4H140" /><path d="M2 31.7H140" /><path d="M2 38.0H140" /><path d="M2 44.3H140" /><path d="M2 50.6H140" /><path d="M2 56.9H140" /><path d="M2 63.2H140" /><path d="M2 69.5H140" /><path d="M2 75.8H140" /></g>
<path d="M1 6c3-3 7-1 7 2c2-3 7-3 8 0c1 4-5 9-15 10z" fill="#f8b5b2"/>
<path d="M32 14.5C50 13 95 13 110 15C115 16 115 20 115 30C115 45 115 52 108 54C90 55 45 55 31 53C27 52 27 45 27 33C27 18 28 15 32 14.5Z" fill="#fdd08b" stroke="#333" stroke-width="0.9"/>
<g fill="#222" font-family="Liberation Sans" font-weight="bold" font-style="italic" font-size="4">
<text x="35" y="28" textLength="73" lengthAdjust="spacingAndGlyphs">“THIS IS A QUOTE. WORDS FULL OF</text>
<text x="34" y="33.8" textLength="74" lengthAdjust="spacingAndGlyphs">WISDOM THAT SOMEONE IMPORTANT</text>
<text x="32" y="40" textLength="77" lengthAdjust="spacingAndGlyphs">SAID AND CAN MAKE THE READER GET</text>
<text x="60" y="45.5" textLength="22" lengthAdjust="spacingAndGlyphs">INSPIRED.”</text></g>
<path d="M54 61c12 2 24 2 35 0l-3 5l3 5c-11 2-23 2-34 0l3-5z" fill="#fff" stroke="#555" stroke-width="0.7"/>
<path d="M63 66h17" stroke="#aaa" stroke-width="0.5"/>
<circle cx="126" cy="66" r="9" fill="#9ad8d2" stroke="#333" stroke-width="0.8"/>
<path d="M119 62c3 1 4 4 2 6c-2 2-1 5 2 6M128 58c2 2 5 2 6 5c-2 2-4 2-5 5" fill="#fdd08b" stroke="none"/>
<path d="M124 55c10-1 16 6 15 15M123 77c6 2 12 1 16-3" fill="none" stroke="#555" stroke-width="0.9"/>
</svg></div>
<div class="num" style="top:639px">6</div>
<div class="thumb" style="top:640px;height:30px" id="th6"><svg width="141" height="30" viewBox="0 0 141 30"><g stroke="#ececec" stroke-width="0.8"><path d="M2 6.5H140" /><path d="M2 12.8H140" /><path d="M2 19.1H140" /><path d="M2 25.4H140" /><path d="M2 31.7H140" /><path d="M2 38.0H140" /><path d="M2 44.3H140" /><path d="M2 50.6H140" /><path d="M2 56.9H140" /><path d="M2 63.2H140" /><path d="M2 69.5H140" /><path d="M2 75.8H140" /></g>
<text x="36" y="17" font-size="4.4" font-family="Liberation Sans" font-weight="bold" font-style="italic" fill="#111" textLength="70" lengthAdjust="spacingAndGlyphs">WHAT IS THIS TOPIC ABOUT?</text>
</svg></div>


<!-- SLIDE -->
<div class="a" id="slide" style="left:347px;top:133px;width:862px;height:486px;background:#fff;border:1px solid #c6c6c6"></div>
<div class="a" style="left:348px;top:163px;width:864px;height:1px;background:#efefef"></div>
<div class="a" style="left:348px;top:202px;width:864px;height:1px;background:#efefef"></div>
<div class="a" style="left:348px;top:241px;width:864px;height:1px;background:#efefef"></div>
<div class="a" style="left:348px;top:280px;width:864px;height:1px;background:#efefef"></div>
<div class="a" style="left:348px;top:318px;width:864px;height:1px;background:#efefef"></div>
<div class="a" style="left:348px;top:357px;width:864px;height:1px;background:#efefef"></div>
<div class="a" style="left:348px;top:396px;width:864px;height:1px;background:#efefef"></div>
<div class="a" style="left:348px;top:435px;width:864px;height:1px;background:#efefef"></div>
<div class="a" style="left:348px;top:474px;width:864px;height:1px;background:#efefef"></div>
<div class="a" style="left:348px;top:513px;width:864px;height:1px;background:#efefef"></div>
<div class="a" style="left:348px;top:552px;width:864px;height:1px;background:#efefef"></div>
<div class="a" style="left:348px;top:590px;width:864px;height:1px;background:#efefef"></div>

<!-- title placeholder -->
<svg class="a" style="left:434px;top:181px" width="690" height="73"><rect x="1.5" y="1.5" width="687" height="70" fill="none" stroke="#8a8a8a" stroke-width="1" stroke-dasharray="2 2"/></svg>
<div class="a" style="left:779px;top:157px;width:1px;height:25px;background:#8a8a8a"></div>
<svg class="a" style="left:766px;top:135px" width="32" height="26">
  <path d="M17.4 19.7A8 8 0 1 1 21.3 11.4" fill="none" stroke="#8a8a8a" stroke-width="4.6"/>
  <path d="M17.4 19.7A8 8 0 1 1 21.3 11.4" fill="none" stroke="#fff" stroke-width="1.6"/>
  <path d="M14.3 11.6L28.2 10.6L21 18Z" fill="#fff" stroke="#8a8a8a" stroke-width="1.7" stroke-linejoin="miter"/>
</svg>
<svg class="a" style="left:425px;top:172px" width="710" height="92">
  <g fill="#fff" stroke="#8a8a8a" stroke-width="2">
    <circle cx="10.5" cy="10.5" r="4.6"/><circle cx="354.5" cy="10.5" r="4.6"/><circle cx="697.5" cy="10.5" r="4.6"/>
    <circle cx="10.5" cy="45" r="4.6"/><circle cx="697.5" cy="45" r="4.6"/>
    <circle cx="10.5" cy="80" r="4.6"/><circle cx="354.5" cy="80" r="4.6"/><circle cx="697.5" cy="80" r="4.6"/>
  </g>
</svg>
<div class="a" style="left:445px;top:208px;width:219px;height:34px;background:#b9b9b9"></div>
<div class="a" id="title" style="left:445px;top:208px;font-size:32px;line-height:36px;font-weight:bold;color:#c0665c;white-space:nowrap;transform-origin:0 100%;transform:skewX(-9deg) scaleX(0.86);-webkit-text-stroke:1.2px #c0665c;letter-spacing:0.5px">INTRODUCTION</div>


<!-- illustration -->
<svg class="a" style="left:770px;top:230px" width="330" height="320" viewBox="770 230 330 320">
<g id="ill" stroke="#141414" stroke-width="2.5" stroke-linejoin="round" stroke-linecap="round">
  <!-- book pages -->
  <path d="M866.5 532V390L870 345C905 328 945 326 972 339C1000 328 1045 330 1072 337L1080 346V532L972 537Z" fill="#fff" stroke="none"/>
  <path d="M866.5 532V390" fill="none" stroke-width="2.8"/>
  <path d="M870 345C905 328 945 326 972 339C1000 328 1045 330 1072 337L1080 346" fill="none"/>
  <path d="M1080 346V533" fill="none" stroke-width="2.8"/>
  <path d="M972 339V539" fill="none" stroke-width="3.2"/>
  <!-- page stack bottom -->
  <path d="M866.8 531.6C885 512 945 507 972 538" fill="none"/>
  <path d="M972 538C1000 507 1058 512 1080 531.6" fill="none"/>
  <path d="M894 519.7H936.4M878.7 526.5H954.3M1009.5 519.7H1047M992.5 526.5H1065.5" fill="none" stroke-width="2"/>
  <path d="M866.5 531.5L972 537L1080 531.5L1080 535.5L972 540.5L866.5 535.5Z" fill="#f7b3b0" stroke-width="2"/>
  <!-- pink picture rect -->
  <path d="M881 362L953 363L953 454L881 455Z" fill="#f8b5b2"/>
  <!-- teal rect -->
  <path d="M986 418L1065.5 417L1066 444.5L987 445Z" fill="#a8ddd8"/>
  <!-- wavy text lines -->
  <g fill="none" stroke-width="2">
    <path d="M884 469c5-4 9 3 14 0s9-4 14-1 9 3 14 0 9-3 14 0 9 1 17-2"/>
    <path d="M909 487c5-4 9 3 14 0s9-3 14 0 9 1 18-1"/>
    <path d="M886 506c5-4 9 3 14 0s9-4 14-1 9 2 14 0 9 0 17 0"/>
    <path d="M987 466c6-4 10 3 16 0s10-4 16-1 10 2 16-1 10-2 16-3"/>
    <path d="M987 479c6-4 10 3 16 0s10-1 16 0 10 0 17-2"/>
    <path d="M1034 493c5-2 10 1 22 0"/>
  </g>
  <g fill="none" stroke-width="1.7">
    <path d="M966.5 471V482M963 487V494M967.5 498V506M1073 485V496M1067.5 499V507M1073 501V516M1073 370V380M1069 388V395M1074 392V402"/>
  </g>
  <!-- bookmark -->
  <path d="M1002 328C1015 325 1035 323 1048 323.5L1048 333C1038 342 1034 365 1037 406L1019.5 387L1009 406C1003 380 1000 350 1002 328Z" fill="#f8b5b2"/>
  <path d="M1007 340V352M1015 348V360M1009 364V374" fill="none" stroke-width="1.8"/>
  <!-- girl shoulders -->
  <path d="M981 332C985 326 1000 322 1015 318L1023.7 321.3L1034 316C1045 318 1055 322 1058 328L1060 336L1048 333L1048 323.5C1035 323 1015 325 1002 328L994 332Z" fill="#fcd38a"/>
  <!-- girl hands -->
  <path d="M980 334C984 328 993 329 994 336C995 344 991 349 986 348C980 347 978 340 980 334Z" fill="#fff"/>
  <path d="M1058 332C1063 328 1070 333 1072 338C1075 344 1070 349 1064 349C1058 349 1054 344 1055 339Z" fill="#fff"/>
  <path d="M972 339L960 335" fill="none"/>
  <!-- pigtails -->
  <path d="M996 288C990 292 982 294 978 300C976 304 979 307 977 311C976 315 978 319 982 320C986 321 989 318 992 318C996 316 1000 313 1001 309C1002 305 999 302 1001 298C1002 294 999 290 996 288Z" fill="#fcd38a"/>
  <path d="M985 301C982 306 986 310 983.5 316M992 299C989.5 304 993 308 990.5 314" fill="none" stroke-width="1.9"/>
  <path d="M1051 289C1056 285 1062 285 1066 288C1070 290 1072 294 1075 296C1079 299 1080 304 1078 307C1076 310 1071 310 1068 307C1065 304 1062 304 1058 301C1054 299 1050 296 1051 289Z" fill="#fcd38a"/>
  <path d="M1058 292C1063 291 1066 296 1070 298C1073 300 1075 302 1076 305" fill="none" stroke-width="1.9"/>
  <!-- girl neck -->
  <path d="M1016.4 299L1015 318.5L1023.7 321.3L1034 316L1032.5 299Z" fill="#fff"/>
  <!-- girl head -->
  <path d="M1025 244C1043 244 1056 256 1056 274C1056 284 1052 290 1046 294C1040 299 1034 301.5 1023 301.5C1012 301.5 1005 298 999 293C993 288 990 282 990 272C990 256 1006 244 1025 244Z" fill="#fff"/>
  <path d="M990.5 274C990 256 1005 244 1025 244C1043 244 1056 256 1055.5 274L1053 273.6C1047 272 1041 268 1036 262L1027.8 256.8C1022 265 1010 269 991.5 274.3Z" fill="#fcd38a"/>
  <path d="M994.5 263C1004 256 1014 250 1023.7 246M993.5 270.2C1004 266 1014 261 1021 256.8C1025 252 1028 249 1030 246.5M1033 246.5C1041 252 1047 259 1050.6 266.2M1042.5 248.7C1048 252 1051 255 1053.3 258.2" fill="none" stroke-width="2.4"/>
  <ellipse cx="1013.7" cy="276.3" rx="2.3" ry="3.2" fill="#1a1a1a" stroke="none"/>
  <ellipse cx="1034.2" cy="274.3" rx="2.3" ry="3.2" fill="#1a1a1a" stroke="none"/>
  <circle cx="1007.6" cy="287.7" r="3.8" fill="#f8b5b2" stroke="none"/>
  <circle cx="1038.5" cy="288.4" r="3.8" fill="#f8b5b2" stroke="none"/>
  <path d="M1021 281C1019 283 1020 285 1023.7 284.8M1017.7 291.7C1019 295 1021 296.4 1022 296.4C1024 296 1025.8 294 1025.8 291.7" fill="none" stroke-width="1.7"/>
  <!-- boy pants -->
  <path d="M814.5 441L860 445L838 456L805.7 522.5L787.2 517Z" fill="#a8ddd8"/>
  <path d="M837.8 452.7L860 452.5L852 529.7L838 529.7Z" fill="#a8ddd8"/>
  <path d="M827.5 477C821 477 817 482 818 487C818.5 491 820 493 822 493Z" fill="#fff" stroke-width="2"/><path d="M857 483C851 484 849 490 850 494C851 497 853 498 855.5 498Z" fill="#fff" stroke-width="2"/>
  <!-- feet -->
  <path d="M787.5 517L805.7 522.5L814.5 539L800 535L784.5 527Z" fill="#fcd38a"/>
  <path d="M838 529.7L852 529.7L870 535L868 539L837 539Z" fill="#fcd38a"/>
  <!-- boy shirt -->
  <path d="M821 386C830 383 840 383 845 386.4L860 389L859.8 443L814.5 441.6L813 437L823 404L821 400Z" fill="#f8b5b2"/>
  <path d="M823.7 404.8L859.8 406.5L859.8 413.4L821 413ZM818.5 421L859.8 422.5L859.8 431.7L815.8 431Z" fill="#fcd38a" stroke-width="1.8"/>
  <path d="M844.7 386.4L855 386.4L856 391L845 391Z" fill="#fcd38a" stroke="none"/>
  <!-- sleeve -->
  <path d="M821 386C830 383 840 383 843.4 386.4L838 406.8C830 405 824 402 821 400C818 396 818 390 821 386Z" fill="#f8b5b2"/>
  <!-- neck -->
  <path d="M828 366L830.5 381L845 387L862.8 389L861.4 372Z" fill="#fff" stroke="none"/>
  <path d="M828 366L830.5 381M861.4 372L862.8 389M846.8 373.8L855.5 386.2M846.8 373.8L861.4 372" fill="none"/>
  <!-- arm -->
  <path d="M843.4 391.7C855 391 870 390 873.6 389.7C890 386 900 383 905 381.8L913 372.6L915.6 371.3L918 375C922 371 928 372 931.4 377.9C933 382 930 386 926 387C918 389 912 389.7 909 389.7C895 396 885 401 881.4 402.8C870 406 860 408 852.5 408L838 406.8Z" fill="#fff"/>
  <path d="M866 398l4-1M873 397l3-1M862 402l4-1M870 401l5-1" fill="none" stroke-width="1.2"/>
  <!-- brush -->
  <path d="M897.5 442C892 438 912 410 922 399L932 404C928 414 905 446 897.5 442Z" fill="#fff"/>
  <path d="M921 395L934 401.5L937 397L923.5 389Z" fill="#fff"/>
  <path d="M923.5 389L939.2 393.6L941 387L928 383Z" fill="#fff"/>
  <path d="M934 374C938 372 944 371 945 372C946 378 944 384 940 387.5L931 383Z" fill="#fcd38a"/>
  <ellipse cx="941.9" cy="404.2" rx="2.6" ry="3.3" fill="#fff" stroke-width="1.7"/>
  <ellipse cx="934.6" cy="417.3" rx="3.3" ry="2.8" fill="#fff" stroke-width="1.7"/>
  <ellipse cx="944.5" cy="429.8" rx="2.8" ry="3.2" fill="#fff" stroke-width="1.7"/>
  <!-- boy head (face) -->
  <path d="M827.8 360L830 368C838 373 846 374 858.4 371.6C868 368 874.5 361.4 874.5 361.4C878 355 878 348 877.4 340C876 332 872 326 869.4 324L833.6 336.5Z" fill="#fff"/>
  <path d="M817.5 358.4C815 360 818 365 827.8 368.7" fill="none"/>
  <!-- hair -->
  <path d="M810.2 348.2C806 342 812 336 814.6 330.7C812 324 820 320 826.3 321.9C830 316 836 316 838 314.6C842 312 846 314 848.2 313.2C852 308 856 306 858.4 307.3C866 306 873 310 871.6 316C871 320 869 322 868.7 323.4C855 328 840 331 833.6 336.5C830 345 828 352 827.8 360C823 361 820 358 819 355.5C815 355 812 352 810.2 348.2Z" fill="#fff"/><path d="M817 349C816 343 821 338 825 336C828 330 834 327 839 325.5C845 321 851 321 856 318.5C861 315 865 314 868.5 313" fill="none" stroke-width="2.1"/>
  
  <ellipse cx="838.7" cy="345.3" rx="2.3" ry="3.3" transform="rotate(-35 838.7 345.3)" fill="#1a1a1a" stroke="none"/>
  <ellipse cx="859.2" cy="339.4" rx="2.2" ry="3.2" transform="rotate(-20 859.2 339.4)" fill="#1a1a1a" stroke="none"/>
  <path d="M854 334.3L862 332.9" fill="none" stroke-width="2.6"/><path d="M854 348.2L859.2 349L856.3 352.6" fill="none" stroke-width="1.7"/>
  <path d="M848.2 359.5C854 357 862 356 864.3 358.4C864 363 858 366 852 365C849 364 847 361 848.2 359.5Z" fill="#fff" stroke-width="1.9"/>
  <circle cx="837.3" cy="361.4" r="4" fill="#fcd38a" stroke="none"/>
  <circle cx="871.6" cy="351.1" r="4" fill="#fcd38a" stroke="none"/>
</g>
</svg>

<!-- body text -->
<div class="a" id="body" style="left:445px;top:336px;font-size:13px;line-height:15.9px;color:#333;white-space:nowrap">
<div style="letter-spacing:0.502px;transform-origin:0 0;transform:scaleX(1.1)">Venus has a beautiful name and is</div>
<div style="letter-spacing:0.396px;transform-origin:0 0;transform:scaleX(1.1)">the second planet from the Sun. It’s</div>
<div style="letter-spacing:0.550px;transform-origin:0 0;transform:scaleX(1.1)">terribly hot—even hotter than</div>
<div style="letter-spacing:0.472px;transform-origin:0 0;transform:scaleX(1.1)">Mercury—and its atmosphere is</div>
<div style="letter-spacing:0.343px;transform-origin:0 0;transform:scaleX(1.1)">extremely poisonous. It’s the second-</div>
<div style="letter-spacing:0.657px;transform-origin:0 0;transform:scaleX(1.1)">brightest natural object in the night</div>
<div style="letter-spacing:0.480px;transform-origin:0 0;transform:scaleX(1.1)">sky after the Moon</div>
</div>

<!-- NOTES -->
<div class="a" style="left:212px;top:633px;width:1142px;height:1px;background:#c6c6c6"></div>
<div class="a" style="left:222px;top:641px;font-size:15px;line-height:17px;color:#595959;white-space:nowrap;letter-spacing:-0.2px">Click to add notes</div>

<!-- RIGHT SCROLLBAR -->
<div class="a" style="left:1344px;top:124px;width:10px;height:452px;background:#dcdcdc"></div>
<div class="a" style="left:1344px;top:124px;width:12px;height:15px;background:#fff;border:1px solid #ababab"></div>
<svg class="a" style="left:1347px;top:129px" width="9" height="5"><path d="M0 5L4.5 0.5L9 5Z" fill="#606060"/></svg>
<div class="a" style="left:1344px;top:170px;width:12px;height:17px;background:#fff;border:1px solid #ababab"></div>
<div class="a" style="left:1344px;top:561px;width:12px;height:15px;background:#fff;border:1px solid #ababab"></div>
<svg class="a" style="left:1347px;top:567px" width="9" height="5"><path d="M0 0L4.5 4.5L9 0Z" fill="#606060"/></svg>
<svg class="a" style="left:1346px;top:582px" width="8" height="26"><path d="M0 6L4 2L8 6ZM0 8H8" fill="#666" stroke="#666" stroke-width="1"/><path d="M0 19L4 23L8 19ZM0 17H8" fill="#666" stroke="#666" stroke-width="1"/></svg>

<!-- STATUS BAR -->
<div id="status" class="a">
  <div class="t" style="left:3px;top:3px;color:#444">Slide 4 of 41</div>
  <svg class="a" style="left:84px;top:3px" width="15" height="13">
    <path d="M0.5 1.5H5C6 1.5 7 2 7 3V12C7 11 6 10.5 5 10.5H0.5Z M7 3C7 2 8 1.5 9 1.5H13.5V6" fill="none" stroke="#555" stroke-width="0.9"/>
    <path d="M8 9L10 11L14 6" fill="none" stroke="#555" stroke-width="1"/>
  </svg>
  <div class="t" style="left:115px;top:3px;color:#444">English (United States)</div>
  <svg class="a" style="left:951px;top:3px" width="12" height="13"><path d="M6 1L3 3.5H9ZM1 6H11M3 8.5H11M1 11H11" fill="#555" stroke="#555" stroke-width="0.9"/></svg>
  <div class="t" style="left:968px;top:3px;color:#444">Notes</div>
  <div class="a" style="left:1017px;top:0;width:38px;height:19px;background:#c8c8c8"></div>
  <svg class="a" style="left:1029px;top:3px" width="15" height="13"><rect x="0.5" y="0.5" width="14" height="12" fill="none" stroke="#555"/><path d="M3 0.5V12.5M5.5 3.5H12V10H5.5Z" fill="none" stroke="#555" stroke-width="0.9"/></svg>
  <svg class="a" style="left:1066px;top:3px" width="15" height="13"><rect x="0.5" y="0.5" width="6" height="5" fill="none" stroke="#555"/><rect x="8.5" y="0.5" width="6" height="5" fill="none" stroke="#555"/><rect x="0.5" y="7.5" width="6" height="5" fill="none" stroke="#555"/><rect x="8.5" y="7.5" width="6" height="5" fill="none" stroke="#555"/></svg>
  <svg class="a" style="left:1103px;top:3px" width="15" height="13"><path d="M0.5 0.5H6.5C7 0.5 7.5 1 7.5 1.5C7.5 1 8 0.5 8.5 0.5H14.5V12.5H8.5C8 12.5 7.5 13 7.5 13C7.5 13 7 12.5 6.5 12.5H0.5Z M7.5 1.5V12.5M2 3.5H6M2 6H6M2 8.5H6M9 3.5H13M9 6H13M9 8.5H13" fill="none" stroke="#555" stroke-width="0.9"/></svg>
  <svg class="a" style="left:1141px;top:3px" width="15" height="14"><path d="M0.5 1.5H14.5M1.5 1.5V8.5H13.5V1.5M7.5 8.5V12.5M4.5 12.5H10.5" fill="none" stroke="#555" stroke-width="1"/></svg>
  <div class="a" style="left:1175px;top:9px;width:6px;height:2px;background:#555"></div>
  <div class="a" style="left:1184px;top:9px;width:100px;height:1px;background:#aaa"></div>
  <div class="a" style="left:1227px;top:4px;width:5px;height:11px;background:#666"></div>
  <div class="a" style="left:1234px;top:7px;width:1px;height:5px;background:#aaa"></div>
  <svg class="a" style="left:1287px;top:5px" width="9" height="9"><path d="M4.5 0V9M0 4.5H9" stroke="#555" stroke-width="1.6"/></svg>
  <div class="t" style="left:1306px;top:3px;color:#444">90%</div>
  <svg class="a" style="left:1340px;top:2px" width="16" height="16"><rect x="0.5" y="0.5" width="15" height="15" fill="none" stroke="#555"/><path d="M8 3V13M3 8H13" stroke="#777" stroke-dasharray="1.5 1.5"/></svg>
</div>

</body></html>
